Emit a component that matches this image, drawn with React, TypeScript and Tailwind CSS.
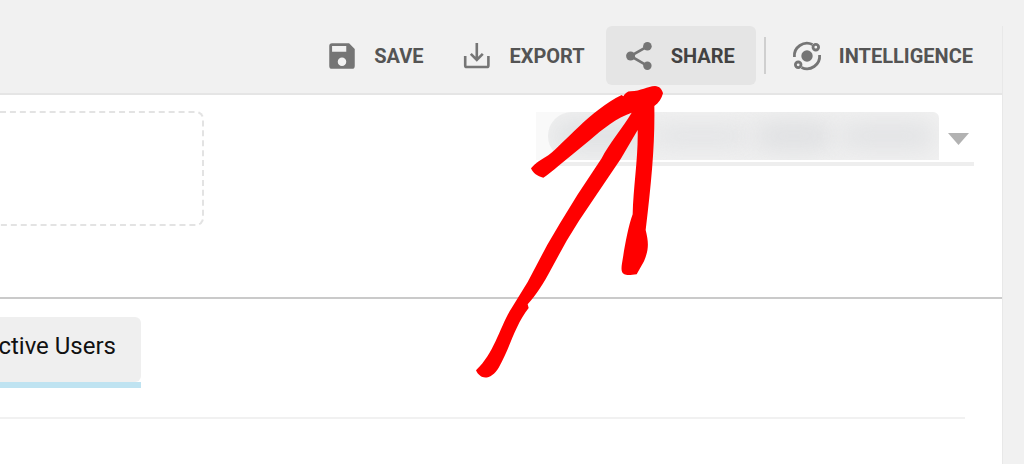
import type { ReactNode } from 'react';

function SaveIcon() {
  return (
    <svg viewBox="0 0 24 24" className="size-[34px] fill-[#757575]" aria-hidden="true">
      <path d="M17 3H5a2 2 0 0 0-2 2v14a2 2 0 0 0 2 2h14a2 2 0 0 0 2-2V7l-4-4zm-5 16a3 3 0 1 1 0-6 3 3 0 0 1 0 6zm3-10H5V5h10v4z" />
    </svg>
  );
}

function ExportIcon() {
  return (
    <svg viewBox="0 0 34 34" className="size-[34px]" fill="none" stroke="#757575" strokeWidth="2.6" aria-hidden="true">
      <path d="M5.2 17.1v9.3a1.6 1.6 0 0 0 1.6 1.6h20a1.6 1.6 0 0 0 1.6-1.6v-9.3" />
      <path d="M16.8 4v16.5M10.8 14.8l6 6.2 6-6.2" />
    </svg>
  );
}

function ShareIcon() {
  return (
    <svg viewBox="0 0 34 34" className="size-[34px] fill-[#757575]" aria-hidden="true">
      <path d="M25.5 7.4L8.5 17l17 9.8" fill="none" stroke="#757575" strokeWidth="2.6" />
      <circle cx="25.4" cy="7.3" r="4.3" />
      <circle cx="8.6" cy="17" r="4.5" />
      <circle cx="25.4" cy="26.8" r="4.2" />
    </svg>
  );
}

function IntelligenceIcon() {
  return (
    <svg viewBox="0 0 34 34" className="size-[34px]" fill="none" stroke="#757575" strokeWidth="2.8" aria-hidden="true">
      <circle cx="17" cy="17" r="5.7" fill="#757575" stroke="none" />
      <path d="M4.4 18A12.6 12.6 0 0 1 22.5 5.6" />
      <path d="M29.6 16A12.6 12.6 0 0 1 11.5 28.4" />
      <circle cx="25.8" cy="8.2" r="2.8" />
      <circle cx="8.2" cy="25.8" r="2.8" />
    </svg>
  );
}

function ToolbarButton({ icon, label, active = false }: { icon: ReactNode; label: string; active?: boolean }) {
  return (
    <button
      type="button"
      className={
        active
          ? 'flex items-center gap-[15px] rounded-md bg-[#e5e5e5] pr-[21px] pl-4 text-[#424242]'
          : 'flex items-center gap-[15px] rounded-md pr-[21px] pl-4 text-[#545454]'
      }
    >
      {icon}
      <span className="text-xl font-bold uppercase">{label}</span>
    </button>
  );
}

function Arrow() {
  return (
    <svg
      viewBox="0 0 660 930"
      className="pointer-events-none absolute top-[80px] left-[460px] h-[310px] w-[220px] fill-[#ff0000]"
      aria-hidden="true"
    >
      <path d="M213 265C225 250 243 239 265 226C315 187 390 92 485 45L490 49C495 40 502 34 512 34C543 33 562 19 585 18C598 18 607 29 609 40C605 56 596 70 583 78C585 190 575 300 557 450C567 490 566 510 552 544L530 583C515 585 500 587 493 583C484 578 484 569 485 557C491 519 502 446 518 403C520 320 535 230 533 150L482 237L409 345L357 422L320 482L274 566C250 612 228 645 203 673L206 684C165 735 150 804 116 863C95 898 62 903 48 871C105 817 118 742 155 684L203 606L262 494L300 430L352 345L425 235C447 191 488 143 515 98C470 113 430 145 390 180L295 258C280 270 264 285 250 293C232 289 219 279 213 265Z" />
    </svg>
  );
}

export default function App() {
  return (
    <div className="relative min-h-screen overflow-hidden bg-[#f1f1f1] pt-[26px] pr-[21px] font-[Roboto,sans-serif]">
      <main className="flex min-h-[438px] flex-col border-r border-[#e8e8e8] bg-white">
        <header className="flex h-[69px] items-start justify-end border-b-2 border-[#e5e5e5] bg-[#f1f1f1] pr-2">
          <div className="flex h-[59px]">
            <ToolbarButton icon={<SaveIcon />} label="Save" />
            <ToolbarButton icon={<ExportIcon />} label="Export" />
            <ToolbarButton icon={<ShareIcon />} label="Share" active />
            <div className="mx-2 my-[11px] border-l-2 border-[#cfcfcf]" />
            <ToolbarButton icon={<IntelligenceIcon />} label="Intelligence" />
          </div>
        </header>

        <section className="flex h-[204px] items-start justify-between border-b-2 border-[#cacaca] pt-4 pr-7">
          <div className="h-[115px] w-[204px] rounded-r-lg border-2 border-l-0 border-dashed border-[#e3e3e3]" />
          <button
            type="button"
            aria-label="Select account"
            className="mt-px flex h-[54px] w-[438px] justify-between border-b-4 border-[#eeeeee]"
          >
            <span className="flex h-12 w-[403px] overflow-hidden rounded-tr-md bg-[#f9f9f9]">
              <span className="ml-3 flex flex-1 items-center justify-around overflow-hidden rounded-l-3xl bg-[#f1f1f1]">
                <span className="h-8 w-24 rounded-full bg-[#dfe1e3] blur-md" />
                <span className="h-6 w-24 rounded-full bg-[#e2e3e5] blur-md" />
                <span className="h-8 w-20 rounded-full bg-[#dfe0e2] blur-md" />
                <span className="h-7 w-24 rounded-full bg-[#e1e2e4] blur-md" />
              </span>
            </span>
            <svg viewBox="0 0 22 12" className="mt-[21px] mr-1 h-3 w-[22px] fill-[#b2b2b2]" aria-hidden="true">
              <path d="M0 0h21L10.5 12z" />
            </svg>
          </button>
        </section>

        <section className="pt-[18px] pr-[37px]">
          <div className="flex w-[141px] justify-end overflow-hidden border-b-[6px] border-[#bfe3f1]">
            <button
              type="button"
              className="flex h-[65px] shrink-0 items-center rounded-md bg-[#efefef] px-[25px] pb-2 text-2xl whitespace-nowrap text-[#111111]"
            >
              Active Users
            </button>
          </div>
          <hr className="mt-[29px] border-t-2 border-[#f1f1f1]" />
        </section>
      </main>
      <Arrow />
    </div>
  );
}
